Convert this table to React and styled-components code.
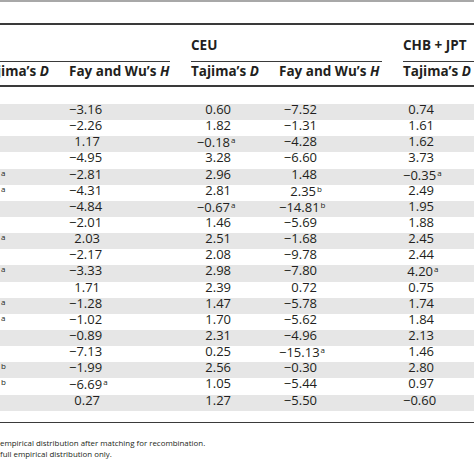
import React from 'react';
import styled, { createGlobalStyle } from 'styled-components';

const GlobalStyle = createGlobalStyle`
  html, body {
    margin: 0;
    padding: 0;
    background: #ffffff;
  }
  body {
    font-family: "Open Sans", "Liberation Sans", sans-serif;
    color: #231f20;
  }
`;

const COLS = '67px 101px 67px 103px 90px';

// where the number ends, measured from the left of its column
const NUM_END = [20, 31, 40, 38, 31];

const Page = styled.div`
  width: 474px;
  height: 474px;
  overflow: hidden;
`;

const TopBar = styled.div`
  height: 2px;
  background: #a8a8a8;
`;

const Table = styled.div`
  margin-left: -19px;
  width: 530px;
  padding-top: 21px;
`;

const Rule = styled.div`
  height: 1.5px;
  background: #3a3a3a;
`;

const HeadGrid = styled.div`
  display: grid;
  grid-template-columns: ${COLS};
  column-gap: 21px;
`;

const Group = styled.div`
  grid-column: span ${p => p.$span || 1};
  font-size: 13.5px;
  font-weight: 700;
  height: 36px;
  line-height: 40px;
  border-bottom: 1px solid #3a3a3a;
  white-space: nowrap;
`;

const ColHead = styled.div`
  font-size: 13.5px;
  font-weight: 700;
  height: 23.5px;
  line-height: 18px;
  white-space: nowrap;

  i {
    font-style: italic;
  }
`;

const Body = styled.div`
  padding-top: 17.5px;
  padding-bottom: 11px;
`;

const Row = styled.div`
  display: grid;
  grid-template-columns: ${COLS};
  column-gap: 21px;
  align-items: start;
  height: 16.15px;
  background: ${p => (p.$shade ? '#e6e6e6' : 'transparent')};
`;

const Num = styled.div`
  width: ${p => p.$end}px;
  text-align: right;
  font-size: 13px;
  line-height: 10px;
  white-space: nowrap;
`;

const Sup = styled.span`
  display: inline-block;
  width: 0;
  font-size: 8px;
  line-height: 8px;
  vertical-align: 4px;
  padding-left: 1px;
`;

const Notes = styled.div`
  padding-top: 15px;
  font-size: 7.9px;
  line-height: 11px;
  white-space: nowrap;
`;

const data = [
  ['', '−3.16', '0.60', '−7.52', '0.74'],
  ['', '−2.26', '1.82', '−1.31', '1.61'],
  ['', '1.17', '−0.18^a', '−4.28', '1.62'],
  ['', '−4.95', '3.28', '−6.60', '3.73'],
  ['^a', '−2.81', '2.96', '1.48', '−0.35^a'],
  ['^a', '−4.31', '2.81', '2.35^b', '2.49'],
  ['', '−4.84', '−0.67^a', '−14.81^b', '1.95'],
  ['', '−2.01', '1.46', '−5.69', '1.88'],
  ['^a', '2.03', '2.51', '−1.68', '2.45'],
  ['', '−2.17', '2.08', '−9.78', '2.44'],
  ['^a', '−3.33', '2.98', '−7.80', '4.20^a'],
  ['', '1.71', '2.39', '0.72', '0.75'],
  ['^a', '−1.28', '1.47', '−5.78', '1.74'],
  ['^a', '−1.02', '1.70', '−5.62', '1.84'],
  ['', '−0.89', '2.31', '−4.96', '2.13'],
  ['', '−7.13', '0.25', '−15.13^a', '1.46'],
  ['^b', '−1.99', '2.56', '−0.30', '2.80'],
  ['^b', '−6.69^a', '1.05', '−5.44', '0.97'],
  ['', '0.27', '1.27', '−5.50', '−0.60'],
];

const Value = ({ text, end }) => {
  const [n, s] = text.split('^');
  return (
    <Num $end={end}>
      {n}
      {s && <Sup>{s}</Sup>}
    </Num>
  );
};

const Tajima = () => (
  <ColHead>
    Tajima’s <i>D</i>
  </ColHead>
);

const FayWu = () => (
  <ColHead>
    Fay and Wu’s <i>H</i>
  </ColHead>
);

export default function App() {
  return (
    <Page>
      <GlobalStyle />
      <TopBar />
      <Table>
        <Rule />
        <HeadGrid>
          <Group $span={2} />
          <Group $span={2}>CEU</Group>
          <Group>CHB + JPT</Group>
          <Tajima />
          <FayWu />
          <Tajima />
          <FayWu />
          <Tajima />
        </HeadGrid>
        <Rule />
        <Body>
          {data.map((row, i) => (
            <Row key={i} $shade={i % 2 === 0}>
              {row.map((v, j) => (
                <Value key={j} text={v} end={NUM_END[j]} />
              ))}
            </Row>
          ))}
        </Body>
        <Rule />
      </Table>
      <Notes>
        empirical distribution after matching for recombination.
        <br />
        full empirical distribution only.
      </Notes>
    </Page>
  );
}
